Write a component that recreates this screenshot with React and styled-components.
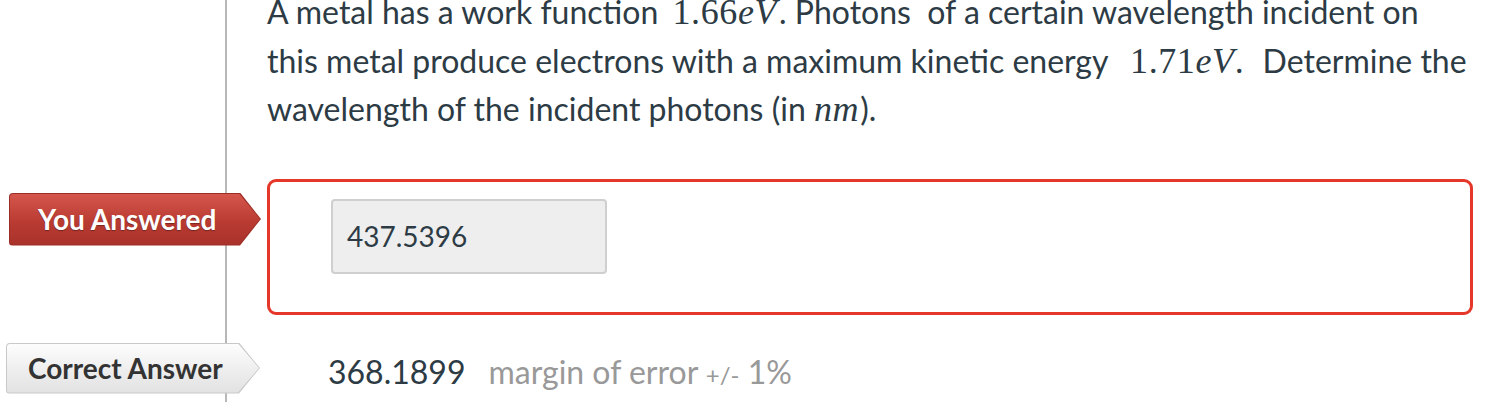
import React from 'react';
import styled, { createGlobalStyle, css } from 'styled-components';

const GlobalStyle = createGlobalStyle`
    html, body {
        margin: 0;
        padding: 0;
        background: #fff;
    }
    body {
        font-family: Lato, "Open Sans", sans-serif;
        color: #2d3b45;
        overflow: hidden;
    }
`;

const App = () => (
    <>
        <GlobalStyle />
        <Page>
            <Question>
                A metal has a work function <Math>1.66<i>eV</i></Math>. Photons&nbsp; of a certain wavelength incident on
                <br />
                this metal produce electrons with a maximum kinetic energy&nbsp; <Math>1.71<i>eV</i>.</Math>&nbsp; Determine the
                <br />
                wavelength of the incident photons (in <Math $tight><i>nm</i></Math>).
            </Question>

            <AnswerRow>
                <LabelCell>
                    <Label $variant="wrong">
                        <LabelFace $variant="wrong">You Answered</LabelFace>
                    </Label>
                </LabelCell>
                <AnswerBox>
                    <AnswerInput>437.5396</AnswerInput>
                </AnswerBox>
            </AnswerRow>

            <CorrectRow>
                <LabelCell>
                    <Label $variant="correct">
                        <LabelFace $variant="correct">Correct Answer</LabelFace>
                    </Label>
                </LabelCell>
                <CorrectValue>
                    368.1899
                    <Margin>
                        margin of error <small>+/-</small> 1%
                    </Margin>
                </CorrectValue>
            </CorrectRow>
        </Page>
    </>
);

export default App;

const Page = styled.div`
    width: 1494px;
    height: 402px;
    overflow: hidden;
    background: linear-gradient(to right, transparent 225px, #b8b8b8 225px, #b8b8b8 227px, transparent 227px);
`;

const Question = styled.p`
    margin: -12px 0 0 267px;
    white-space: nowrap;
    font-size: 32px;
    line-height: 47.5px;
`;

const Math = styled.span`
    font-family: "Liberation Serif", "DejaVu Serif", serif;
    font-size: 36px;
    letter-spacing: 0.6px;
    margin: ${(p) => (p.$tight ? '0 1px 0 0' : '0 2px 0 6px')};
    i {
        font-style: italic;
    }
`;

const AnswerRow = styled.div`
    display: grid;
    grid-template-columns: 267px 1206px;
    align-items: start;
    margin-top: 45px;
`;

const CorrectRow = styled(AnswerRow)`
    margin-top: 28px;
    align-items: center;
`;

const LabelCell = styled.div`
    padding-top: 14px;
    ${CorrectRow} & {
        padding-top: 0;
    }
`;

const arrow = css`
    clip-path: polygon(0 0, calc(100% - 21px) 0, 100% 50%, calc(100% - 21px) 100%, 0 100%);
`;

const Label = styled.div`
    ${arrow};
    margin-left: ${(p) => (p.$variant === 'wrong' ? '9px' : '6px')};
    width: ${(p) => (p.$variant === 'wrong' ? '252px' : '254px')};
    height: ${(p) => (p.$variant === 'wrong' ? '53px' : '51px')};
    padding: 1px;
    box-sizing: border-box;
    border-radius: 4px;
    background: ${(p) => (p.$variant === 'wrong' ? '#9c2d26' : '#c9c9c9')};
`;

const LabelFace = styled.div`
    ${arrow};
    height: 100%;
    border-radius: 3px;
    display: flex;
    align-items: center;
    padding-left: ${(p) => (p.$variant === 'wrong' ? '28px' : '21px')};
    padding-bottom: 1px;
    box-sizing: border-box;
    font-weight: 700;
    font-size: 28px;
    ${(p) =>
        p.$variant === 'wrong'
            ? css`
                  color: #fff;
                  background: linear-gradient(#d5564d, #b93b32 55%, #a9322b);
                  text-shadow: 0 1px 1px rgba(0, 0, 0, 0.35);
              `
            : css`
                  color: #333;
                  background: linear-gradient(#fdfdfd, #ececec 60%, #e2e2e2);
              `}
`;

const AnswerBox = styled.div`
    box-sizing: border-box;
    height: 136px;
    border: 3px solid #e5372a;
    border-radius: 9px;
    padding: 17px 0 0 61px;
`;

const AnswerInput = styled.div`
    box-sizing: border-box;
    width: 276px;
    height: 75px;
    background: #eee;
    border: 2px solid #cfcfcf;
    border-radius: 4px;
    display: flex;
    align-items: center;
    padding-left: 14px;
    font-size: 28px;
    color: #2d3b45;
`;

const CorrectValue = styled.div`
    padding-left: 61px;
    padding-top: 6px;
    font-size: 32px;
    color: #2d3b45;
`;

const Margin = styled.span`
    color: #999;
    margin-left: 23px;
    small {
        font-size: 24px;
    }
`;
